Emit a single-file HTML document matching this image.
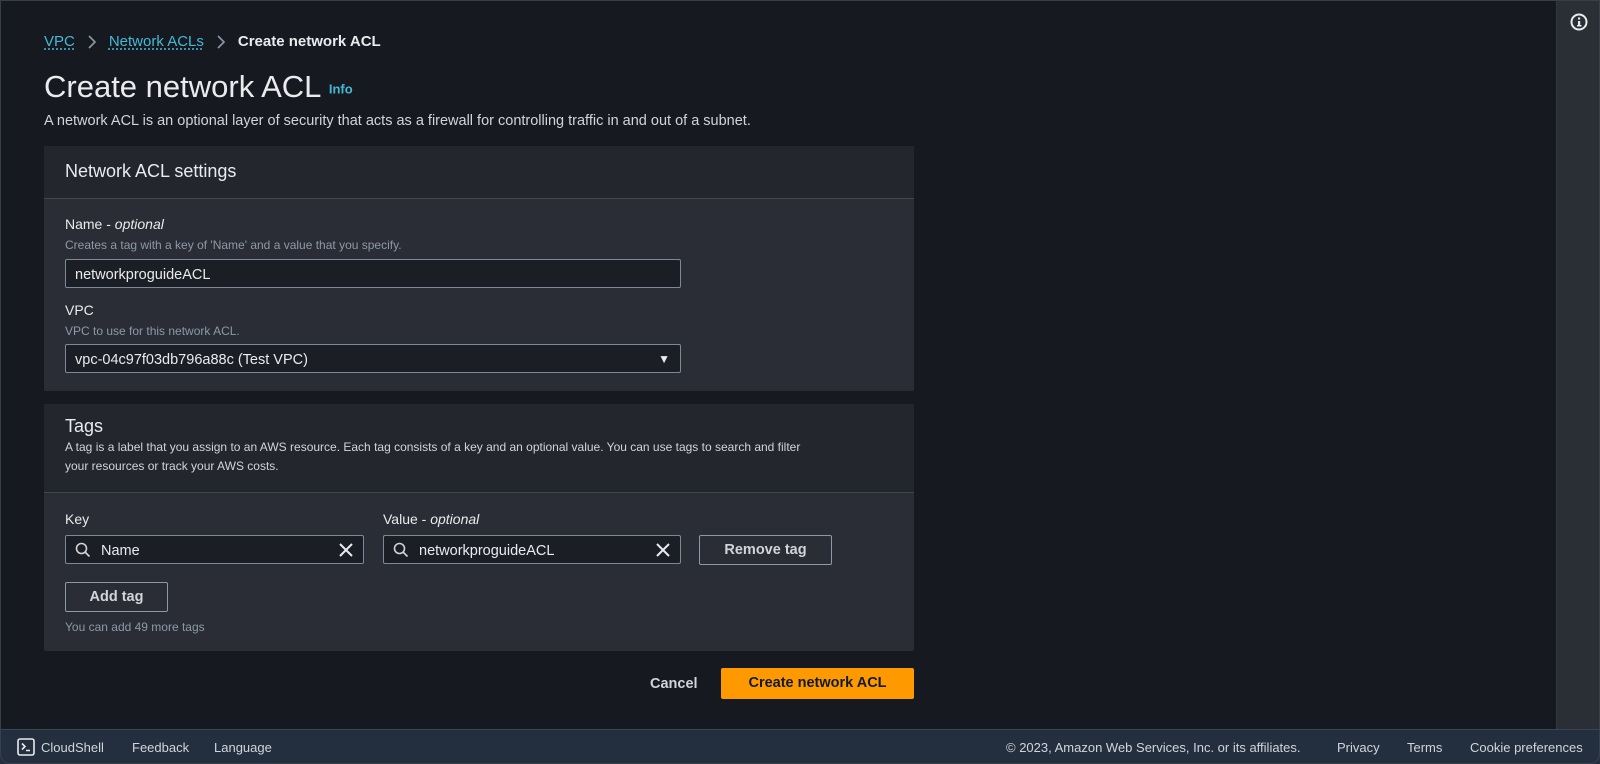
<!DOCTYPE html>
<html><head><meta charset="utf-8"><style>
*{box-sizing:border-box;margin:0;padding:0}
body{width:1600px;height:764px;background:#16191f;font-family:"Liberation Sans",sans-serif;color:#d1d5db;position:relative;overflow:hidden}
.abs{position:absolute;white-space:nowrap}
.frame{position:absolute;left:0;top:0;width:1600px;height:764px;border:1px solid #3a3f47;border-radius:0 0 10px 10px;pointer-events:none}
.side{position:absolute;left:1556px;top:0;width:44px;height:729px;background:#2a2e35;border-left:1px dotted #3a3f47}
.bc{top:33px;font-size:15px;display:flex;align-items:center}
.bc a{color:#44b9d6;text-decoration:underline dotted;text-underline-offset:3px}
.bc svg{margin:0 12px}
h1{position:absolute;left:44px;top:69px;font-size:31px;font-weight:400;color:#e9ebed}
.panel{position:absolute;left:44px;width:870px;background:#2a2d35;border-radius:2px}
.ph{background:#23262d;border-bottom:1px solid #414750}
.lbl{font-size:14px;color:#e9ebed}
.hint{font-size:12px;color:#8d99a8}
.inp{position:absolute;height:29px;background:#1b1e25;border:1px solid #7d8998;border-radius:2px;font-size:14.5px;color:#e9ebed;display:flex;align-items:center;padding-top:2px}
.btn{position:absolute;border:1px solid #8d99a8;border-radius:2px;font-size:14.5px;font-weight:700;color:#d1d5db;text-align:center}
.foot{position:absolute;left:0;top:729px;width:1600px;height:35px;background:#232f3e;border-top:1px solid #3a4452;font-size:13px;color:#d1d5db}
</style></head><body>
<div class="side"><svg class="abs" style="left:12px;top:12px" width="20" height="20" viewBox="0 0 20 20"><circle cx="10" cy="10" r="7.5" fill="none" stroke="#e9ebed" stroke-width="2"/><rect x="9" y="9" width="2.2" height="5" fill="#e9ebed"/><rect x="9" y="5.5" width="2.2" height="2" fill="#e9ebed"/><rect x="8" y="13" width="4.5" height="1.5" fill="#e9ebed"/></svg></div>

<div class="abs bc" style="left:44px"><a>VPC</a><svg width="10" height="16" viewBox="0 0 10 16"><path d="M2 2l6 6-6 6" fill="none" stroke="#8d99a8" stroke-width="1.6"/></svg><a>Network ACLs</a><svg width="10" height="16" viewBox="0 0 10 16"><path d="M2 2l6 6-6 6" fill="none" stroke="#8d99a8" stroke-width="1.6"/></svg><b style="color:#e9ebed">Create network ACL</b></div>
<h1>Create network ACL <span style="font-size:13px;font-weight:700;color:#44b9d6;vertical-align:middle">Info</span></h1>
<div class="abs" style="left:44px;top:113px;font-size:14.5px;color:#d1d5db">A network ACL is an optional layer of security that acts as a firewall for controlling traffic in and out of a subnet.</div>

<div class="panel" style="top:146px;height:245px">
 <div class="ph" style="height:53px;padding:15px 21px;font-size:18px;color:#e9ebed">Network ACL settings</div>
 <div class="abs lbl" style="left:21px;top:70px">Name - <i>optional</i></div>
 <div class="abs hint" style="left:21px;top:92px">Creates a tag with a key of 'Name' and a value that you specify.</div>
 <div class="inp" style="left:21px;top:113px;width:616px;padding-left:9px">networkproguideACL</div>
 <div class="abs lbl" style="left:21px;top:156px">VPC</div>
 <div class="abs hint" style="left:21px;top:178px">VPC to use for this network ACL.</div>
 <div class="inp" style="left:21px;top:198px;width:616px;padding-left:9px">vpc-04c97f03db796a88c (Test VPC)<span class="abs" style="right:10px;top:7px;font-size:12px">&#9660;</span></div>
</div>

<div class="panel" style="top:404px;height:247px">
 <div class="ph" style="height:89px;padding:12px 21px">
  <div style="font-size:18px;color:#e9ebed">Tags</div>
  <div style="font-size:12px;color:#d1d5db;line-height:19px;margin-top:1px">A tag is a label that you assign to an AWS resource. Each tag consists of a key and an optional value. You can use tags to search and filter<br>your resources or track your AWS costs.</div>
 </div>
 <div class="abs lbl" style="left:21px;top:107px">Key</div>
 <div class="abs lbl" style="left:339px;top:107px">Value - <i>optional</i></div>
 <div class="inp" style="left:21px;top:131px;width:299px;padding-left:35px">Name
  <svg class="abs" style="left:9px;top:6px" width="16" height="16" viewBox="0 0 16 16"><circle cx="6.5" cy="6.5" r="5" fill="none" stroke="#d1d5db" stroke-width="1.6"/><path d="M10 10l4.5 4.5" stroke="#d1d5db" stroke-width="1.6"/></svg>
  <svg class="abs" style="right:9px;top:6px" width="16" height="16" viewBox="0 0 16 16"><path d="M2 2l12 12M14 2L2 14" stroke="#e9ebed" stroke-width="2"/></svg></div>
 <div class="inp" style="left:339px;top:131px;width:298px;padding-left:35px">networkproguideACL
  <svg class="abs" style="left:9px;top:6px" width="16" height="16" viewBox="0 0 16 16"><circle cx="6.5" cy="6.5" r="5" fill="none" stroke="#d1d5db" stroke-width="1.6"/><path d="M10 10l4.5 4.5" stroke="#d1d5db" stroke-width="1.6"/></svg>
  <svg class="abs" style="right:9px;top:6px" width="16" height="16" viewBox="0 0 16 16"><path d="M2 2l12 12M14 2L2 14" stroke="#e9ebed" stroke-width="2"/></svg></div>
 <div class="btn" style="left:655px;top:131px;width:133px;height:30px;line-height:28px">Remove tag</div>
 <div class="btn" style="left:21px;top:178px;width:103px;height:30px;line-height:28px">Add tag</div>
 <div class="abs hint" style="left:21px;top:216px">You can add 49 more tags</div>
</div>

<div class="abs" style="left:650px;top:676px;font-size:14.5px;font-weight:700;color:#d1d5db">Cancel</div>
<div class="abs" style="left:721px;top:668px;width:193px;height:31px;background:#ff9900;border-radius:2px;color:#0f1b2a;font-size:14.5px;font-weight:700;text-align:center;line-height:31px">Create network ACL</div>

<div class="foot">
 <svg class="abs" style="left:17px;top:8px" width="18" height="18" viewBox="0 0 18 18"><rect x="1" y="1" width="16" height="16" rx="2" fill="none" stroke="#e9ebed" stroke-width="1.6"/><path d="M5 5.5l3 3-3 3M9 12.5h4" fill="none" stroke="#e9ebed" stroke-width="1.6"/></svg>
 <span class="abs" style="left:41px;top:10px">CloudShell</span>
 <span class="abs" style="left:132px;top:10px">Feedback</span>
 <span class="abs" style="left:214px;top:10px">Language</span>
 <span class="abs" style="left:1006px;top:10px">© 2023, Amazon Web Services, Inc. or its affiliates.</span>
 <span class="abs" style="left:1337px;top:10px">Privacy</span>
 <span class="abs" style="left:1407px;top:10px">Terms</span>
 <span class="abs" style="left:1470px;top:10px">Cookie preferences</span>
</div>
<div class="frame"></div>
</body></html>
